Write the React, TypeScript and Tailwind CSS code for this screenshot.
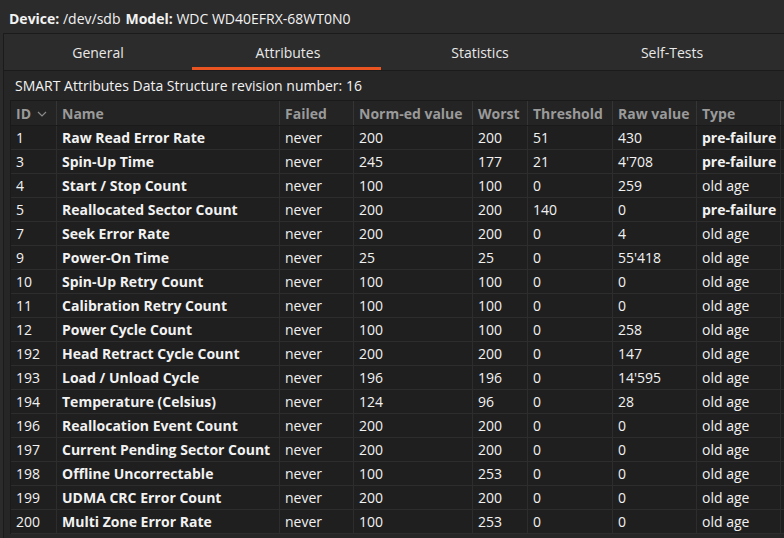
import { ReactNode } from 'react'

type Attr = {
  id: number
  name: string
  norm: string
  worst: string
  threshold: string
  raw: string
  preFailure: boolean
}

const attributes: Attr[] = [
  { id: 1, name: 'Raw Read Error Rate', norm: '200', worst: '200', threshold: '51', raw: '430', preFailure: true },
  { id: 3, name: 'Spin-Up Time', norm: '245', worst: '177', threshold: '21', raw: "4'708", preFailure: true },
  { id: 4, name: 'Start / Stop Count', norm: '100', worst: '100', threshold: '0', raw: '259', preFailure: false },
  { id: 5, name: 'Reallocated Sector Count', norm: '200', worst: '200', threshold: '140', raw: '0', preFailure: true },
  { id: 7, name: 'Seek Error Rate', norm: '200', worst: '200', threshold: '0', raw: '4', preFailure: false },
  { id: 9, name: 'Power-On Time', norm: '25', worst: '25', threshold: '0', raw: "55'418", preFailure: false },
  { id: 10, name: 'Spin-Up Retry Count', norm: '100', worst: '100', threshold: '0', raw: '0', preFailure: false },
  { id: 11, name: 'Calibration Retry Count', norm: '100', worst: '100', threshold: '0', raw: '0', preFailure: false },
  { id: 12, name: 'Power Cycle Count', norm: '100', worst: '100', threshold: '0', raw: '258', preFailure: false },
  { id: 192, name: 'Head Retract Cycle Count', norm: '200', worst: '200', threshold: '0', raw: '147', preFailure: false },
  { id: 193, name: 'Load / Unload Cycle', norm: '196', worst: '196', threshold: '0', raw: "14'595", preFailure: false },
  { id: 194, name: 'Temperature (Celsius)', norm: '124', worst: '96', threshold: '0', raw: '28', preFailure: false },
  { id: 196, name: 'Reallocation Event Count', norm: '200', worst: '200', threshold: '0', raw: '0', preFailure: false },
  { id: 197, name: 'Current Pending Sector Count', norm: '200', worst: '200', threshold: '0', raw: '0', preFailure: false },
  { id: 198, name: 'Offline Uncorrectable', norm: '100', worst: '253', threshold: '0', raw: '0', preFailure: false },
  { id: 199, name: 'UDMA CRC Error Count', norm: '200', worst: '200', threshold: '0', raw: '0', preFailure: false },
  { id: 200, name: 'Multi Zone Error Rate', norm: '100', worst: '253', threshold: '0', raw: '0', preFailure: false },
]

const tabs = ['General', 'Attributes', 'Statistics', 'Self-Tests']

const cols = 'grid grid-cols-[46px_223px_74px_119px_55px_85px_84px_84px_1fr]'

function Cell({ children, className = '' }: { children?: ReactNode; className?: string }) {
  return (
    <div className={`h-[24px] flex items-center pl-[5px] border-r border-b border-[#2d2d2d] whitespace-nowrap overflow-hidden ${className}`}>
      {children}
    </div>
  )
}

function HeadCell({ children }: { children?: ReactNode }) {
  return (
    <div className="h-[24px] flex items-center pl-[5px] border-r border-[#353535] font-bold text-[#9a9a9a] whitespace-nowrap overflow-hidden">
      {children}
    </div>
  )
}

export default function App() {
  return (
    <div
      className="w-[784px] h-[538px] overflow-hidden bg-[#2b2b2b] text-[#f2f2f2] text-[14px] flex flex-col"
      style={{ fontFamily: '"Open Sans", "DejaVu Sans", sans-serif' }}
    >
      {/* Device header */}
      <div className="h-[33px] flex-none flex items-center pt-[3px] px-[9px] gap-[5px]">
        <span>
          <span className="font-bold">Device:</span> /dev/sdb
        </span>
        <span>
          <span className="font-bold">Model:</span> WDC WD40EFRX-68WT0N0
        </span>
      </div>

      {/* Notebook */}
      <div className="flex-1 min-h-0 ml-[3px] border-t border-l border-[#1b1b1b] bg-[#262626] flex flex-col">
        <div className="h-[37px] flex-none flex border-b border-[#1b1b1b] bg-[#2c2c2c]">
          {tabs.map((tab, i) => (
            <div
              key={tab}
              className={`${i === 0 ? 'w-[188px]' : 'w-[192px]'} relative flex items-center justify-center text-[#e8e8e8]`}
            >
              {tab}
              {tab === 'Attributes' && (
                <div className="absolute bottom-0 left-0 right-[3px] h-[3px] bg-[#e95420]" />
              )}
            </div>
          ))}
        </div>

        <div className="h-[29px] flex-none flex items-center px-[11px]">
          SMART Attributes Data Structure revision number: 16
        </div>

        {/* Attributes table */}
        <div className="ml-[6px] border-t border-l border-[#1a1a1a] bg-[#1f1f1f]">
          <div className={`${cols} bg-[#242424] border-b border-[#1a1a1a]`}>
            <HeadCell>
              ID
              <svg width="10" height="6" viewBox="0 0 10 6" className="ml-[6px] mt-[2px]">
                <polyline points="1,1 5,5 9,1" fill="none" stroke="#8a8a8a" strokeWidth="1.2" />
              </svg>
            </HeadCell>
            <HeadCell>Name</HeadCell>
            <HeadCell>Failed</HeadCell>
            <HeadCell>Norm-ed value</HeadCell>
            <HeadCell>Worst</HeadCell>
            <HeadCell>Threshold</HeadCell>
            <HeadCell>Raw value</HeadCell>
            <HeadCell>Type</HeadCell>
            <HeadCell />
          </div>
          {attributes.map((a) => (
            <div key={a.id} className={cols}>
              <Cell>{a.id}</Cell>
              <Cell className="font-bold">{a.name}</Cell>
              <Cell>never</Cell>
              <Cell>{a.norm}</Cell>
              <Cell>{a.worst}</Cell>
              <Cell>{a.threshold}</Cell>
              <Cell>{a.raw}</Cell>
              <Cell className={a.preFailure ? 'font-bold' : ''}>{a.preFailure ? 'pre-failure' : 'old age'}</Cell>
              <Cell />
            </div>
          ))}
        </div>
      </div>
    </div>
  )
}
